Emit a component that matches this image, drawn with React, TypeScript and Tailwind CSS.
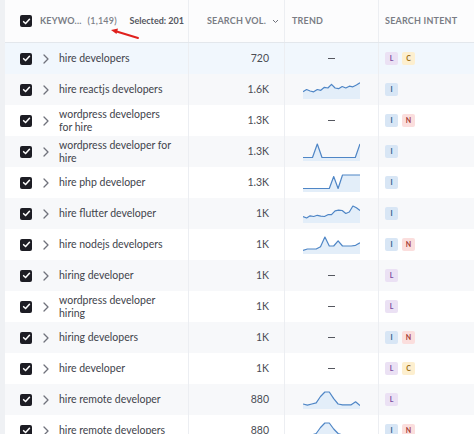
import React from "react";

type Row = {
  kw: string;
  vol: string;
  trend?: number[];
  intents: string[];
};

const rows: Row[] = [
  { kw: "hire developers", vol: "720", intents: ["L", "C"] },
  {
    kw: "hire reactjs developers",
    vol: "1.6K",
    trend: [0.35, 0.5, 0.4, 0.35, 0.5, 0.45, 0.65, 0.6, 0.85, 0.6, 0.55, 0.7, 0.6, 0.72, 0.68, 0.8, 0.95],
    intents: ["I"],
  },
  { kw: "wordpress developers for hire", vol: "1.3K", intents: ["I", "N"] },
  {
    kw: "wordpress developer for hire",
    vol: "1.3K",
    trend: [0.1, 0.1, 0.1, 1, 0.1, 0.1, 0.1, 0.1, 0.1, 0.1, 0.1, 0.1, 1],
    intents: ["I"],
  },
  {
    kw: "hire php developer",
    vol: "1.3K",
    trend: [0.1, 0.1, 0.1, 0.1, 0.1, 0.1, 0.1, 0.9, 0.1, 1, 1, 1, 1, 1],
    intents: ["I"],
  },
  {
    kw: "hire flutter developer",
    vol: "1K",
    trend: [0.3, 0.2, 0.35, 0.3, 0.38, 0.32, 0.3, 0.42, 0.42, 0.68, 0.72, 0.7, 0.5, 0.6, 1, 0.88, 0.7],
    intents: ["I"],
  },
  {
    kw: "hire nodejs developers",
    vol: "1K",
    trend: [0.1, 0.2, 0.2, 0.2, 0.35, 1, 0.4, 0.4, 0.75, 0.4, 0.4, 0.4, 0.45, 0.62],
    intents: ["I", "N"],
  },
  { kw: "hiring developer", vol: "1K", intents: ["L"] },
  { kw: "wordpress developer hiring", vol: "1K", intents: ["L"] },
  { kw: "hiring developers", vol: "1K", intents: ["I", "N"] },
  { kw: "hire developer", vol: "1K", intents: ["L", "C"] },
  {
    kw: "hire remote developer",
    vol: "880",
    trend: [0.2, 0.12, 0.2, 0.28, 0.7, 1, 1, 0.55, 0.2, 0.15, 0.15, 0.15, 0.35, 0.1],
    intents: ["L"],
  },
  {
    kw: "hire remote developers",
    vol: "880",
    trend: [0.1, 0.1, 0.2, 0.3, 0.7, 1, 1, 0.6, 0.3, 0.2, 0.2, 0.2, 0.2, 0.2],
    intents: ["I", "N"],
  },
];

const badgeStyle: Record<string, string> = {
  L: "bg-[#ebe1f4] text-[#7a4a9e]",
  C: "bg-[#fdefcf] text-[#9a6a12]",
  I: "bg-[#d8e6f5] text-[#2e5d8e]",
  N: "bg-[#fbdedd] text-[#a33a36]",
};

function Checkbox() {
  return (
    <span className="flex h-[12px] w-[12px] shrink-0 items-center justify-center rounded-[2px] bg-[#1d1d24]">
      <svg width="9" height="9" viewBox="0 0 10 10">
        <path d="M1.8 5.2 L4 7.3 L8.3 2.6" fill="none" stroke="white" strokeWidth="1.7" strokeLinecap="round" strokeLinejoin="round" />
      </svg>
    </span>
  );
}

function Chevron() {
  return (
    <svg width="6" height="10" viewBox="0 0 6 10" className="shrink-0">
      <path d="M1 1 L5 5 L1 9" fill="none" stroke="#70727c" strokeWidth="1.3" strokeLinecap="round" strokeLinejoin="round" />
    </svg>
  );
}

function Spark({ pts }: { pts: number[] }) {
  const w = 57;
  const h = 18;
  const xy = pts.map((p, i) => [(i / (pts.length - 1)) * w, 1 + (1 - p) * (h - 3)]);
  const line = xy.map(([x, y], i) => `${i ? "L" : "M"}${x.toFixed(1)} ${y.toFixed(1)}`).join(" ");
  const area = `${line} L${w} ${h} L0 ${h} Z`;
  return (
    <svg width={w} height={h} viewBox={`0 0 ${w} ${h}`}>
      <path d={area} fill="#e3eef9" />
      <path d={line} fill="none" stroke="#4f86c6" strokeWidth="1.2" strokeLinejoin="round" />
    </svg>
  );
}

export default function App() {
  return (
    <div className="h-[434px] w-[474px] overflow-hidden bg-[#eff1f4] pl-[5px] font-['Lato','Open_Sans',sans-serif]">
      <div className="relative bg-white">
        {/* header */}
        <div className="grid h-[43px] grid-cols-[184px_96px_94px_1fr] border-b border-[#e3e7ec] bg-[#fcfcfd] text-[9px] font-bold uppercase tracking-[0.2px] text-[#7a7c85]">
          <div className="flex items-center border-r border-[#eceef2] pl-[15px]">
            <Checkbox />
            <span className="ml-[8px]">Keywo...</span>
            <span className="ml-[6px] font-semibold">(1,149)</span>
            <span className="ml-auto pr-[4px] text-[9px] normal-case tracking-normal text-[#55575f]">Selected: 201</span>
          </div>
          <div className="flex items-center justify-end gap-[6px] border-r border-[#eceef2] pr-[5px]">
            <span>Search vol.</span>
            <svg width="7" height="5" viewBox="0 0 7 5">
              <path d="M1 1 L3.5 3.5 L6 1" fill="none" stroke="#70727c" strokeWidth="1" />
            </svg>
          </div>
          <div className="flex items-center border-r border-[#eceef2] pl-[7px]">Trend</div>
          <div className="flex items-center pl-[6px]">Search intent</div>
        </div>

        {/* rows */}
        {rows.map((r, i) => (
          <div
            key={i}
            className={`grid h-[31px] grid-cols-[184px_96px_94px_1fr] text-[10px] text-[#41434b] ${
              i === 0 ? "bg-[#f1f7fd]" : i % 2 === 1 ? "bg-[#f7f8fa]" : "bg-white"
            }`}
          >
            <div className="flex items-center border-r border-[#eceef2] pl-[15px]">
              <Checkbox />
              <span className="ml-[11px]">
                <Chevron />
              </span>
              <span className="ml-[10px] w-[116px] text-[10.5px] leading-[13px]">{r.kw}</span>
            </div>
            <div className="flex items-center justify-end border-r border-[#eceef2] pr-[15px] text-[10.5px] text-[#4a4c54]">
              {r.vol}
            </div>
            <div className="flex items-center justify-center border-r border-[#eceef2]">
              {r.trend ? <Spark pts={r.trend} /> : <span className="h-[1.5px] w-[7px] bg-[#55575f]" />}
            </div>
            <div className="flex items-center gap-[4px] pl-[6px]">
              {r.intents.map((b) => (
                <span
                  key={b}
                  className={`flex h-[13px] w-[13px] items-center justify-center rounded-[2px] text-[7px] font-bold ${badgeStyle[b]}`}
                >
                  {b}
                </span>
              ))}
            </div>
          </div>
        ))}

        {/* red annotation arrow */}
        <svg className="absolute left-[100px] top-[26px]" width="40" height="18" viewBox="0 0 40 18">
          <path d="M33 12 L10 5" stroke="#e0201d" strokeWidth="2" strokeLinecap="round" />
          <path d="M6 4 L13 2.5 L11.5 8 Z" fill="#e0201d" />
        </svg>
      </div>
    </div>
  );
}
